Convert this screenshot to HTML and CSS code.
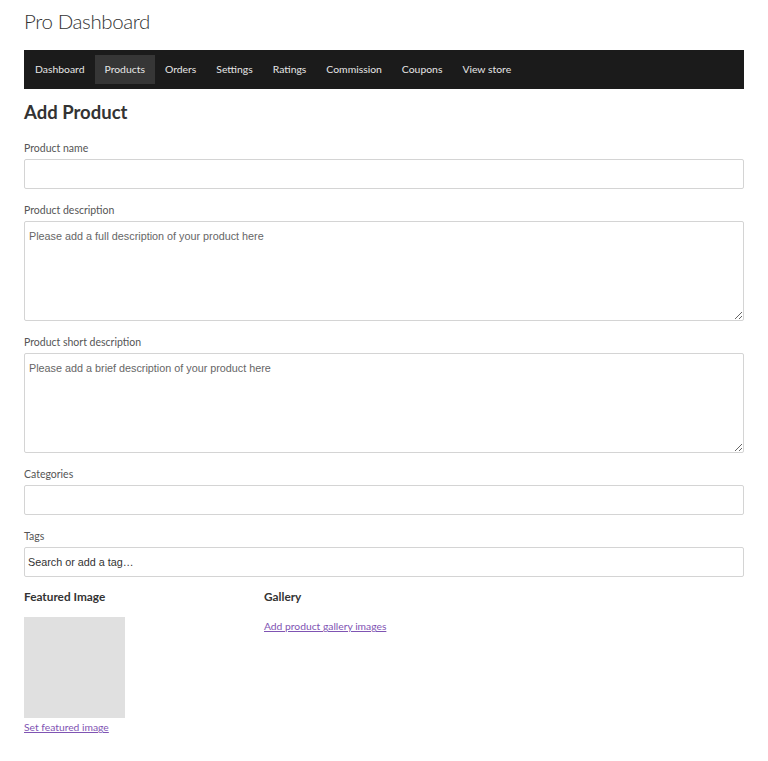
FILE: index.html
```html
<!DOCTYPE html>
<html>
<head>
<meta charset="utf-8">
<link rel="stylesheet" href="styles.css">
</head>
<body>
<div class="page">
  <h1 class="site-title">Pro Dashboard</h1>
  <nav class="nav">
    <a class="nav-item">Dashboard</a>
    <a class="nav-item active">Products</a>
    <a class="nav-item">Orders</a>
    <a class="nav-item">Settings</a>
    <a class="nav-item">Ratings</a>
    <a class="nav-item">Commission</a>
    <a class="nav-item">Coupons</a>
    <a class="nav-item">View store</a>
  </nav>
  <h2 class="page-title">Add Product</h2>
  <form class="form">
    <div class="field">
      <label class="label">Product name</label>
      <input class="input" type="text">
    </div>
    <div class="field">
      <label class="label">Product description</label>
      <textarea class="textarea" placeholder="Please add a full description of your product here"></textarea>
    </div>
    <div class="field">
      <label class="label">Product short description</label>
      <textarea class="textarea" placeholder="Please add a brief description of your product here"></textarea>
    </div>
    <div class="field">
      <label class="label">Categories</label>
      <input class="input" type="text">
    </div>
    <div class="field">
      <label class="label">Tags</label>
      <input class="input tags" type="text" placeholder="Search or add a tag…">
    </div>
    <div class="media">
      <div class="media-col featured">
        <h3 class="media-title">Featured Image</h3>
        <div class="placeholder"></div>
        <a class="link" href="#">Set featured image</a>
      </div>
      <div class="media-col gallery">
        <h3 class="media-title">Gallery</h3>
        <a class="link gallery-link" href="#">Add product gallery images</a>
      </div>
    </div>
  </form>
</div>
</body>
</html>
```

FILE: styles.css
```css
* { box-sizing: border-box; }
html, body { margin: 0; padding: 0; background: #fff; }
body {
  font-family: "Lato", "Open Sans", sans-serif;
  color: #333;
}
.page {
  width: 720px;
  margin-left: 24px;
  padding-top: 7px;
}
.site-title {
  margin: 0;
  font-size: 20.5px;
  font-weight: 300;
  color: #333;
  line-height: 28px;
  letter-spacing: -0.4px;
}
.nav {
  margin-top: 15px;
  background: #1b1b1b;
  height: 39px;
  display: flex;
  align-items: center;
  padding: 0 1px;
}
.nav-item {
  color: #e6e6e6;
  font-size: 10.4px;
  padding: 0 10px;
  height: 29px;
  line-height: 29px;
  text-decoration: none;
}
.nav-item.active { background: #363636; }
.page-title {
  margin: 11px 0 0;
  font-size: 18.5px;
  font-weight: 700;
  line-height: 24px;
  color: #333;
}
.form { margin-top: 17px; }
.field { margin-bottom: 14px; }
.label {
  display: block;
  font-size: 10.5px;
  color: #555;
  line-height: 14px;
  margin-bottom: 4px;
}
.input, .textarea {
  display: block;
  width: 100%;
  border: 1px solid #d4d4d4;
  border-radius: 2px;
  background: #fff;
  font-family: "Liberation Sans", Arial, sans-serif;
  font-size: 10.8px;
  color: #333;
  margin: 0;
}
.input { height: 30px; padding: 0 3px; }
.textarea {
  height: 100px;
  padding: 8px 4px;
  resize: vertical;
}
.textarea::placeholder { color: #666; }
.tags::placeholder { color: #333; }
.media {
  display: grid;
  grid-template-columns: 240px 1fr;
  margin-top: -2px;
}
.media-title {
  margin: 0;
  font-size: 11.8px;
  font-weight: 700;
  line-height: 16px;
  color: #333;
}
.placeholder {
  width: 101px;
  height: 101px;
  background: #e0e0e0;
  margin-top: 12px;
}
.link {
  display: block;
  width: fit-content;
  color: #7f54b3;
  font-size: 10.3px;
  line-height: 14px;
  text-decoration: underline;
}
.featured .link { margin-top: 2px; }
.gallery-link { margin-top: 14px; }
```
